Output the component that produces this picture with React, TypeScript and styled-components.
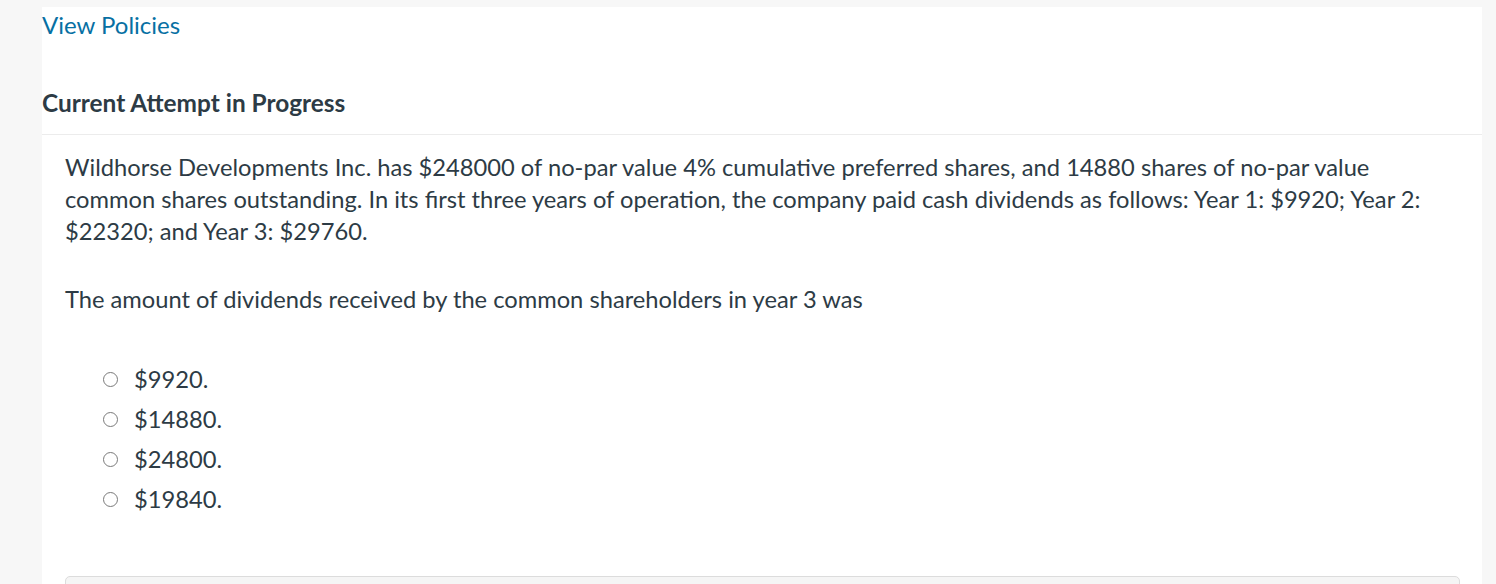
import React from "react";
import styled, { createGlobalStyle } from "styled-components";

const Global = createGlobalStyle`
  html, body {
    margin: 0;
    padding: 0;
    background: #f7f7f7;
    font-family: Lato, "Open Sans", "Liberation Sans", sans-serif;
    color: #2d3b45;
  }
`;

const Page = styled.div`
  padding: 7px 14px 0 42px;
  height: 584px;
  box-sizing: border-box;
  overflow: hidden;
`;

const Panel = styled.main`
  background: #ffffff;
  min-height: 700px;
`;

const PolicyLink = styled.a`
  display: inline-block;
  font-size: 24px;
  line-height: 35px;
  color: #0770a3;
  text-decoration: none;
`;

const Title = styled.h2`
  margin: 46px 0 0;
  padding-bottom: 16px;
  border-bottom: 1px solid #ececec;
  font-size: 24.4px;
  line-height: 30px;
  font-weight: 700;
  color: #2d3b45;
`;

const Question = styled.section`
  padding: 16px 22px 0 23px;
`;

const Para = styled.p`
  margin: 0 0 36px;
  font-size: 23.7px;
  line-height: 32px;
`;

const Options = styled.ul`
  list-style: none;
  margin: 44px 0 0;
  padding: 0 0 0 38px;
`;

const Option = styled.li`
  display: flex;
  align-items: center;
  gap: 16px;
  height: 40px;
  font-size: 23.7px;
`;

const Radio = styled.span`
  width: 15px;
  height: 15px;
  border: 1.5px solid #7a7a7a;
  border-radius: 50%;
  box-sizing: border-box;
  flex: none;
  background: #fff;
`;

const AnswerBox = styled.div`
  margin-top: 57px;
  height: 60px;
  background: #f5f5f5;
  border: 1px solid #dcdcdc;
  border-radius: 5px;
`;

const options = ["$9920.", "$14880.", "$24800.", "$19840."];

export default function App() {
  return (
    <>
      <Global />
      <Page>
        <Panel>
          <PolicyLink href="#">View Policies</PolicyLink>
          <Title>Current Attempt in Progress</Title>
          <Question>
            <Para>
              Wildhorse Developments Inc. has $248000 of no-par value 4% cumulative preferred shares, and 14880 shares of no-par value common shares outstanding. In its first three years of operation, the company paid cash dividends as follows: Year 1: $9920; Year 2: $22320; and Year 3: $29760.
            </Para>
            <Para>The amount of dividends received by the common shareholders in year 3 was</Para>
            <Options>
              {options.map((o) => (
                <Option key={o}>
                  <Radio />
                  {o}
                </Option>
              ))}
            </Options>
            <AnswerBox />
          </Question>
        </Panel>
      </Page>
    </>
  );
}
